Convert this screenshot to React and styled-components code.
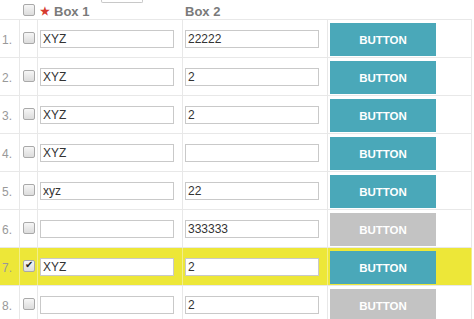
import { createGlobalStyle, styled } from "styled-components";

const Global = createGlobalStyle`
  html, body {
    margin: 0;
    background: #fff;
    font-family: "Liberation Sans", Arial, sans-serif;
    overflow: hidden;
  }
`;

const Toolbar = styled.div`
  height: 3px;
  overflow: hidden;
  display: flex;
  align-items: flex-end;
  padding-left: 101px;
`;

const PageSize = styled.div`
  width: 40px;
  height: 10px;
  border: 1px solid #c8c8c8;
  border-top: none;
  border-radius: 0 0 2px 2px;
`;

const Grid = styled.div`
  width: 472px;
`;

const Row = styled.div`
  display: grid;
  grid-template-columns: 20px 18px 145px 145px 144px;
  height: ${(p) => (p.$header ? "17px" : "38px")};
  box-sizing: border-box;
  border-bottom: 1px solid #e8e8e8;
  background: ${(p) => (p.$active ? "#ede738" : "transparent")};
`;

const Cell = styled.div`
  box-sizing: border-box;
  display: flex;
  align-items: ${(p) => p.$align || "center"};
  padding-left: ${(p) => p.$pad ?? 2}px;
  padding-top: ${(p) => p.$top ?? 0}px;
  border-right: 1px solid
    ${(p) => (p.$header ? "transparent" : p.$active ? "#f2ee8a" : "#e8e8e8")};
`;

const Num = styled.span`
  font-size: 12px;
  color: #999;
  padding-top: 2px;
`;

const Check = styled.input.attrs({ type: "checkbox" })`
  appearance: none;
  margin: 0 0 2px 0;
  width: 12px;
  height: 12px;
  box-sizing: border-box;
  border: 1px solid #a9a9a9;
  border-radius: 2px;
  background: linear-gradient(#f6f6f6, #dcdcdc);
  position: relative;

  &:checked::after {
    content: "\\2714";
    position: absolute;
    left: 1px;
    top: -2px;
    font-size: 10px;
    color: #222;
  }
`;

const Label = styled.span`
  font-size: 13px;
  font-weight: 700;
  color: #7a7a7a;
  display: flex;
  align-items: center;
  gap: 4px;
`;

const Star = styled.span`
  color: #d63a2f;
  font-size: 11px;
`;

const Field = styled.input`
  width: 134px;
  height: 18px;
  box-sizing: border-box;
  border: 1px solid #c9c9c9;
  background: #fff;
  font-family: "Liberation Sans", Arial, sans-serif;
  font-size: 12px;
  color: #333;
  padding: 0 0 0 2px;
  margin: 1px 0 0 0;
  outline: none;
`;

const Button = styled.button`
  width: 106px;
  height: 33px;
  border: none;
  background: ${(p) => (p.disabled ? "#c3c3c3" : "#4aa8b9")};
  color: #fff;
  font-family: "Liberation Sans", Arial, sans-serif;
  font-size: 11.5px;
  font-weight: 700;
  padding: 0;
`;

const rows = [
  { a: "XYZ", b: "22222" },
  { a: "XYZ", b: "2" },
  { a: "XYZ", b: "2" },
  { a: "XYZ", b: "" },
  { a: "xyz", b: "22" },
  { a: "", b: "333333", disabled: true },
  { a: "XYZ", b: "2", checked: true },
  { a: "", b: "2", disabled: true },
];

export default function App() {
  return (
    <>
      <Global />
      <Toolbar>
        <PageSize />
      </Toolbar>
      <Grid>
        <Row $header>
          <Cell $header />
          <Cell $header $pad={3}>
            <Check readOnly />
          </Cell>
          <Cell $header>
            <Label>
              <Star>★</Star>Box 1
            </Label>
          </Cell>
          <Cell $header>
            <Label>Box 2</Label>
          </Cell>
          <Cell $header />
        </Row>
        {rows.map((r, i) => (
          <Row key={i} $active={r.checked}>
            <Cell $active={r.checked}>
              <Num>{i + 1}.</Num>
            </Cell>
            <Cell $active={r.checked} $pad={3}>
              <Check checked={!!r.checked} readOnly />
            </Cell>
            <Cell $active={r.checked}>
              <Field defaultValue={r.a} />
            </Cell>
            <Cell $active={r.checked}>
              <Field defaultValue={r.b} />
            </Cell>
            <Cell $active={r.checked} $align="flex-start" $top={3}>
              <Button disabled={r.disabled}>BUTTON</Button>
            </Cell>
          </Row>
        ))}
      </Grid>
    </>
  );
}
